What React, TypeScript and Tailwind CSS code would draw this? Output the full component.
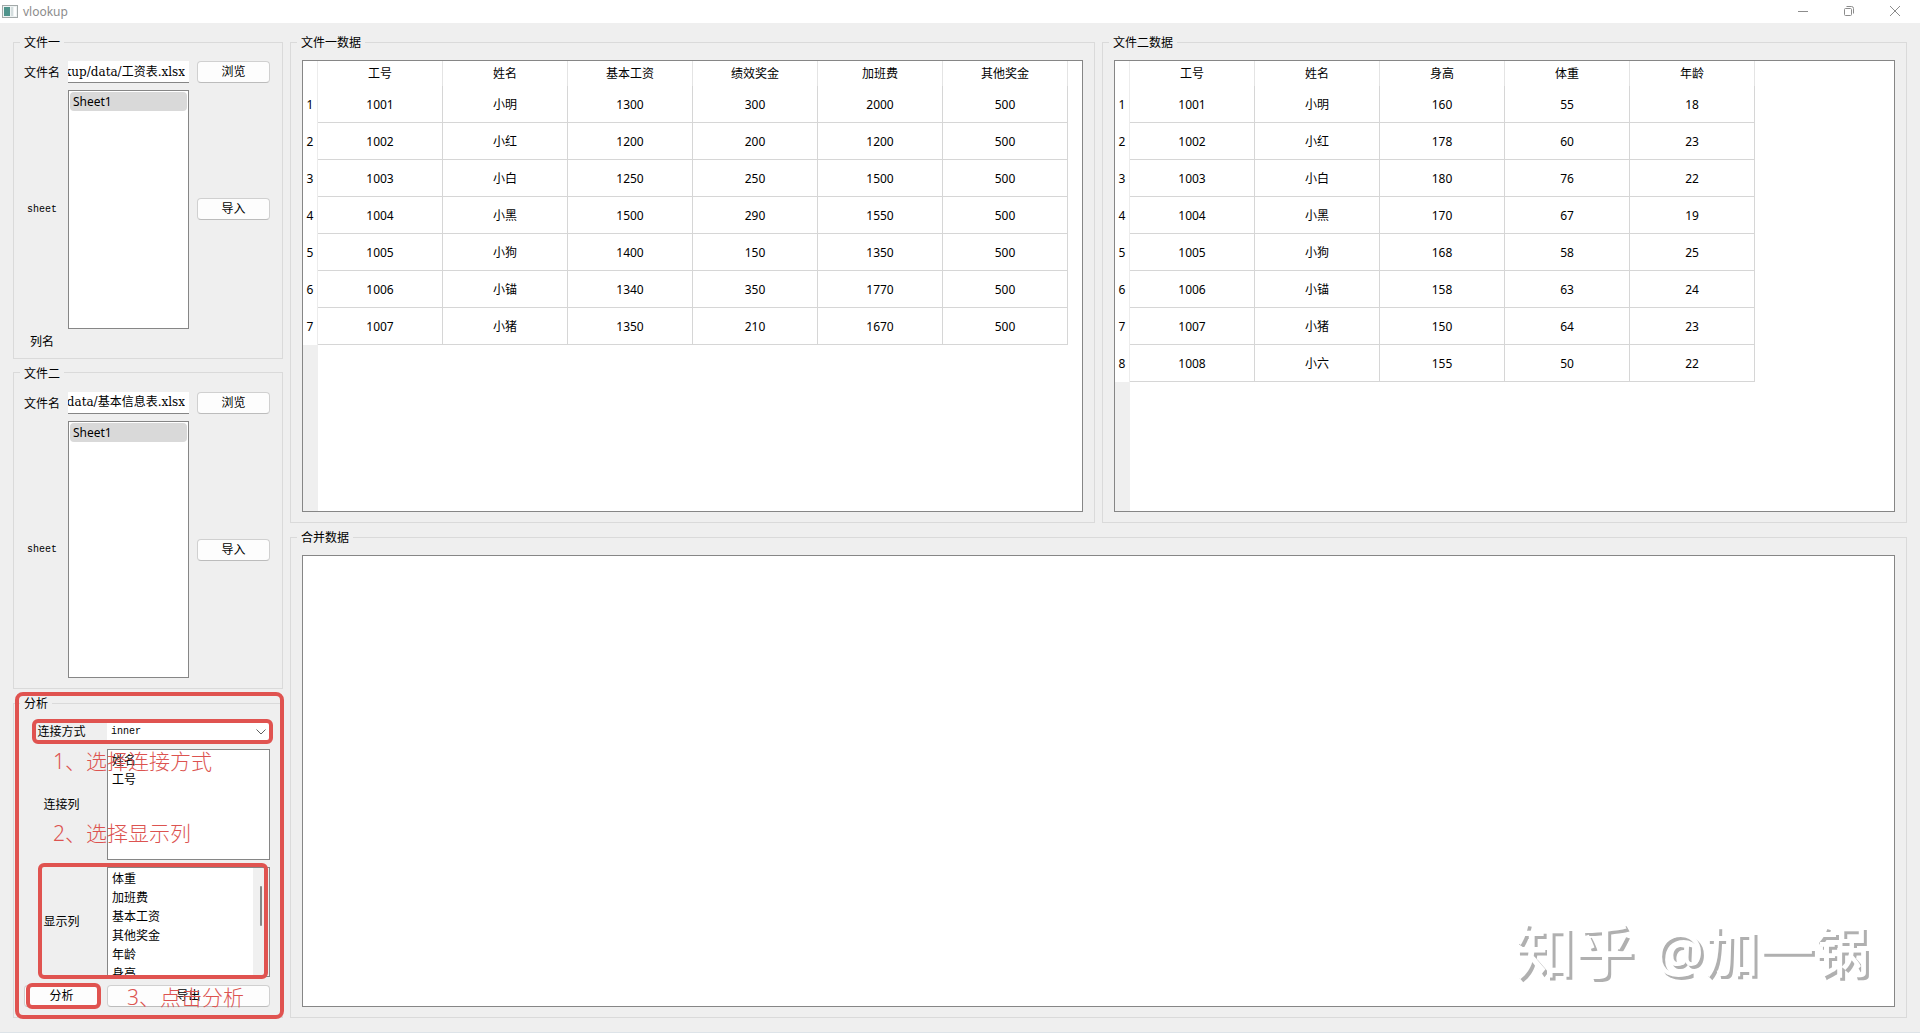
import React, { useEffect, useRef, useState } from 'react';

type Cell = string | number;

interface SheetData {
  columns: string[];
  rows: Cell[][];
}

const salary: SheetData = {
  columns: ['工号', '姓名', '基本工资', '绩效奖金', '加班费', '其他奖金'],
  rows: [
    [1001, '小明', 1300, 300, 2000, 500],
    [1002, '小红', 1200, 200, 1200, 500],
    [1003, '小白', 1250, 250, 1500, 500],
    [1004, '小黑', 1500, 290, 1550, 500],
    [1005, '小狗', 1400, 150, 1350, 500],
    [1006, '小锚', 1340, 350, 1770, 500],
    [1007, '小猪', 1350, 210, 1670, 500],
  ],
};

const profile: SheetData = {
  columns: ['工号', '姓名', '身高', '体重', '年龄'],
  rows: [
    [1001, '小明', 160, 55, 18],
    [1002, '小红', 178, 60, 23],
    [1003, '小白', 180, 76, 22],
    [1004, '小黑', 170, 67, 19],
    [1005, '小狗', 168, 58, 25],
    [1006, '小锚', 158, 63, 24],
    [1007, '小猪', 150, 64, 23],
    [1008, '小六', 155, 50, 22],
  ],
};

const joinColumns = ['姓名', '工号'];
const showColumns = ['体重', '加班费', '基本工资', '其他奖金', '年龄', '身高'];

const TitleBar: React.FC = () => (
  <header className="flex h-[23px] shrink-0 items-center bg-white pl-0.5 pr-0.5 text-[#8c8c8c]">
    <svg width="16" height="14" viewBox="0 0 16 14" aria-hidden="true">
      <rect x="0.5" y="0.5" width="15" height="12" fill="#eef3f3" stroke="#a3a9a9" />
      <rect x="2" y="2" width="6" height="9" fill="#4f948c" />
      <rect x="9" y="2" width="2" height="9" fill="#d5dedf" />
      <rect x="12" y="2" width="2" height="9" fill="#ffffff" />
    </svg>
    <h1 className="ml-[5px] flex-1 text-[12px] leading-4">vlookup</h1>
    <button aria-label="最小化" className="flex h-full w-[46px] items-center justify-center pb-0.5">
      <svg width="12" height="12" viewBox="0 0 12 12" fill="none" stroke="currentColor">
        <path d="M1 6.5h10" />
      </svg>
    </button>
    <button aria-label="还原" className="flex h-full w-[46px] items-center justify-center pb-0.5">
      <svg width="12" height="12" viewBox="0 0 12 12" fill="none" stroke="currentColor">
        <rect x="1.5" y="3.5" width="7" height="7" rx="1" />
        <path d="M3.5 1.5h5a2 2 0 0 1 2 2v5" />
      </svg>
    </button>
    <button aria-label="关闭" className="flex h-full w-[46px] items-center justify-center pb-0.5">
      <svg width="12" height="12" viewBox="0 0 12 12" fill="none" stroke="currentColor">
        <path d="M1 1l10 10M11 1L1 11" />
      </svg>
    </button>
  </header>
);

interface GroupProps {
  title: string;
  children: React.ReactNode;
}

const Group: React.FC<GroupProps> = ({ title, children }) => (
  <fieldset className="flex min-h-0 min-w-0 flex-1 flex-col border border-[#dadada]">
    <legend className="ml-1.5 h-[14px] px-1 leading-4">{title}</legend>
    {children}
  </fieldset>
);

const PushButton: React.FC<{ children: React.ReactNode }> = ({ children }) => (
  <button className="h-[22px] w-full self-end rounded border border-[#d0d0d0] border-b-[#bcbcbc] bg-[#fdfdfd] leading-4">
    {children}
  </button>
);

interface ListBoxProps {
  label: string;
  items: string[];
  selected?: string;
  scroll?: boolean;
}

const ListBox: React.FC<ListBoxProps> = ({ label, items, selected, scroll }) => (
  <div className="flex min-h-0 overflow-hidden border border-[#868686] bg-white">
    <ul role="listbox" aria-label={label} className="min-w-0 flex-1 overflow-hidden p-px">
      {items.map(item => (
        <li
          key={item}
          role="option"
          aria-selected={item === selected}
          className={`h-[19px] rounded-sm pl-[3px] leading-[19px] ${item === selected ? 'bg-[#d9d9d9]' : ''}`}
        >
          {item}
        </li>
      ))}
    </ul>
    {scroll && (
      <div className="flex w-4 justify-center bg-[#f0f0f0] pt-[18px]">
        <div className="h-10 w-0.5 rounded bg-[#868686]" />
      </div>
    )}
  </div>
);

interface FilePanelProps {
  id: string;
  title: string;
  path: string;
  showColumnName?: boolean;
}

const FilePanel: React.FC<FilePanelProps> = ({ id, title, path, showColumnName }) => {
  const [value, setValue] = useState(path);
  const inputRef = useRef<HTMLInputElement>(null);

  // keep the file name at the end of the path visible
  useEffect(() => {
    if (inputRef.current) {
      inputRef.current.scrollLeft = inputRef.current.scrollWidth;
    }
  }, [value]);

  return (
    <Group title={title}>
      <div className="grid min-h-0 flex-1 grid-cols-[36px_121px_1fr] grid-rows-[22px_1fr] gap-x-2 gap-y-[7px] pb-2.5 pl-2.5 pr-3 pt-3">
        <label htmlFor={id} className="self-center whitespace-nowrap pt-0.5 leading-4">文件名</label>
        <input
          id={id}
          ref={inputRef}
          value={value}
          onChange={e => setValue(e.target.value)}
          className="w-full border-b border-[#868686] bg-white pr-1 font-['DejaVu_Serif','Noto_Sans_CJK_SC',serif] text-[12px] outline-none"
        />
        <PushButton>浏览</PushButton>
        <span className="self-center text-center font-['Liberation_Mono',monospace] text-[10px]">sheet</span>
        <ListBox label="sheet" items={['Sheet1']} selected="Sheet1" />
        <div className="flex flex-col justify-center">
          <PushButton>导入</PushButton>
        </div>
        {showColumnName && <span className="text-center leading-3">列名</span>}
      </div>
    </Group>
  );
};

const AnalysisPanel: React.FC = () => {
  const [how, setHow] = useState('inner');

  return (
    <div className="relative flex min-h-0 flex-1 flex-col">
      <Group title="分析">
        <div className="grid min-h-0 flex-1 grid-cols-[75px_1fr] grid-rows-[21px_1fr_1fr_23px] gap-x-2 gap-y-[7px] pb-2.5 pl-2.5 pr-3 pt-[11px]">
          <label htmlFor="how" className="self-center text-center leading-4">连接方式</label>
          <div className="relative">
            <select
              id="how"
              value={how}
              onChange={e => setHow(e.target.value)}
              className="h-full w-full appearance-none bg-white pl-1 font-['Liberation_Mono',monospace] text-[10px] outline-none"
            >
              <option>inner</option>
              <option>left</option>
              <option>right</option>
              <option>outer</option>
            </select>
            <svg className="pointer-events-none absolute right-1 top-2" width="10" height="6" viewBox="0 0 10 6" fill="none" stroke="#5f5f5f">
              <path d="M0.5 0.5L5 5L9.5 0.5" />
            </svg>
          </div>
          <span className="self-center text-center leading-4">连接列</span>
          <ListBox label="连接列" items={joinColumns} />
          <span className="self-center text-center leading-4">显示列</span>
          <ListBox label="显示列" items={showColumns} scroll />
          <PushButton>分析</PushButton>
          <PushButton>导出</PushButton>
        </div>
      </Group>

      {/* tutorial marks drawn over the panel */}
      <div className="pointer-events-none absolute inset-0 font-light text-[21px] leading-6 text-[#dc5350]">
        <div className="absolute -bottom-px -right-px -top-1 left-0.5 rounded-lg border-4 border-[#e05350]" />
        <div className="absolute left-[19px] right-2.5 top-[23px] h-[25px] rounded-md border-4 border-[#e05350]" />
        <div className="absolute bottom-[39px] left-[25px] right-[15px] top-[167px] rounded-md border-4 border-[#e05350]" />
        <div className="absolute bottom-[9px] left-[13px] h-[26px] w-[75px] rounded-md border-4 border-[#e05350]" />
        <p className="absolute left-10 top-[53px] whitespace-nowrap">1、选择连接方式</p>
        <p className="absolute left-10 top-[125px] whitespace-nowrap">2、选择显示列</p>
        <p className="absolute bottom-[9px] left-[114px] whitespace-nowrap">3、点击分析</p>
      </div>
    </div>
  );
};

const DataTable: React.FC<{ data: SheetData }> = ({ data }) => (
  <div className="flex min-h-0 flex-1 flex-col overflow-hidden border border-[#868686] bg-white">
    <table className="w-max table-fixed border-separate border-spacing-0 text-center">
      <thead>
        <tr className="h-[25px]">
          <th className="w-[15px] border-r border-[#ececec] p-0" />
          {data.columns.map(c => (
            <th key={c} className="w-[125px] border-r border-[#e4e4e4] p-0 font-normal">{c}</th>
          ))}
        </tr>
      </thead>
      <tbody>
        {data.rows.map((row, i) => (
          <tr key={i} className="h-[37px]">
            <th className="border-r border-[#ececec] p-0 font-normal">{i + 1}</th>
            {row.map((cell, j) => (
              <td key={j} className="border-b border-r border-[#d6d6d6] p-0 pt-0.5">{cell}</td>
            ))}
          </tr>
        ))}
      </tbody>
    </table>
    <div className="w-[15px] flex-1 bg-[#efefef]" />
  </div>
);

const App: React.FC = () => (
  <div className="flex h-screen flex-col border-b border-[#dde3e8] bg-[#efefef] font-['Noto_Sans','Noto_Sans_CJK_SC',sans-serif] text-[12px] text-black">
    <TitleBar />
    <main className="flex min-h-0 flex-1 gap-[7px] px-[13px] pb-[14px] pt-3">
      <aside className="flex w-[270px] shrink-0 flex-col gap-[7px]">
        <FilePanel id="file1" title="文件一" path="vlookup/data/工资表.xlsx" showColumnName />
        <FilePanel id="file2" title="文件二" path="vlookup/data/基本信息表.xlsx" />
        <AnalysisPanel />
      </aside>

      <div className="flex min-w-0 flex-1 flex-col gap-[7px]">
        <div className="flex min-h-0 flex-1 gap-[7px]">
          <Group title="文件一数据">
            <div className="flex min-h-0 flex-1 px-[11px] pb-2.5 pt-[11px]">
              <DataTable data={salary} />
            </div>
          </Group>
          <Group title="文件二数据">
            <div className="flex min-h-0 flex-1 px-[11px] pb-2.5 pt-[11px]">
              <DataTable data={profile} />
            </div>
          </Group>
        </div>
        <div className="relative flex min-h-0 flex-1 flex-col">
          <Group title="合并数据">
            <div className="flex min-h-0 flex-1 px-[11px] pb-2.5 pt-[11px]">
              <div className="flex-1 border border-[#868686] bg-white" />
            </div>
          </Group>
          <p className="pointer-events-none absolute bottom-[31px] right-[38px] flex items-center gap-5 whitespace-nowrap font-medium leading-[72px] text-white [text-shadow:3px_3px_0_#b0b0b0]">
            <span className="text-[60px]">知乎</span>
            <span className="text-[55px]">@加一锅</span>
          </p>
        </div>
      </div>
    </main>
  </div>
);

export default App;
